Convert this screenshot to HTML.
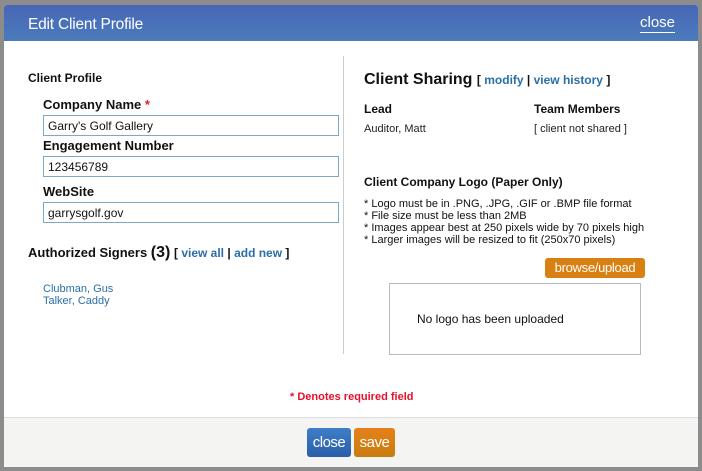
<!DOCTYPE html>
<html><head><style>
*{margin:0;padding:0;box-sizing:border-box}
body{width:702px;height:471px;background:#8c8c8c;font-family:"Liberation Sans",Arial,sans-serif;position:relative;overflow:hidden}
.dlg{position:absolute;left:4px;top:5px;width:694px;height:462px;background:#fff;overflow:hidden;border-radius:3px 3px 0 0}
.hdr{position:absolute;left:0;top:0;width:694px;height:36px;background:linear-gradient(#4866b6,#4a7bbb)}
.a{position:absolute;white-space:nowrap}
.b{font-weight:bold;color:#111}
.lnk{color:#2a6fa8}
input{position:absolute;height:21px;border:1px solid #7aaac8;font:12px "Liberation Sans",Arial,sans-serif;padding-left:4px;color:#111;background:#fff}
.foot{position:absolute;left:0;top:412px;width:694px;height:50px;background:#f4f4f2;border-top:1px solid #ddd}
.btn{position:absolute;top:423px;height:29px;border-radius:3px;color:#fff;font-size:15px;line-height:29px;text-align:center;letter-spacing:-0.5px}
</style></head><body>
<div class="dlg">
<div class="hdr"></div>
<div class="a" style="left:24px;top:11px;color:#fff;font-size:15.5px;letter-spacing:-0.2px">Edit Client Profile</div>
<div class="a" style="left:636px;top:9px;color:#fff;font-size:15px;border-bottom:1px solid #fff;line-height:18px">close</div>
<div class="a" style="left:339px;top:51px;width:1px;height:298px;background:#ccc"></div>
<div class="a b" style="left:24px;top:66px;font-size:12px">Client Profile</div>
<div class="a b" style="left:39px;top:92px;font-size:13px">Company Name <span style="color:#e02020">*</span></div>
<input style="left:39px;top:110px;width:296px" value="Garry's Golf Gallery">
<div class="a b" style="left:39px;top:133px;font-size:13px">Engagement Number</div>
<input style="left:39px;top:151px;width:296px" value="123456789">
<div class="a b" style="left:39px;top:179px;font-size:13px">WebSite</div>
<input style="left:39px;top:197px;width:296px" value="garrysgolf.gov">
<div class="a" style="left:24px;top:239px;font-size:13px;color:#111;font-weight:bold">Authorized Signers <span style="font-size:16px">(3)</span> <span style="font-size:12px">[ <span class="lnk">view all</span> | <span class="lnk">add new</span> ]</span></div>
<div class="a lnk" style="left:39px;top:278px;font-size:11px;line-height:12px">Clubman, Gus<br>Talker, Caddy</div>

<div class="a b" style="left:360px;top:66px;font-size:16px">Client Sharing <span style="font-size:12px">[ <span class="lnk">modify</span> | <span class="lnk">view history</span> ]</span></div>
<div class="a b" style="left:360px;top:97px;font-size:12px">Lead</div>
<div class="a b" style="left:530px;top:97px;font-size:12px">Team Members</div>
<div class="a" style="left:360px;top:118px;font-size:11px;color:#222">Auditor, Matt</div>
<div class="a" style="left:530px;top:118px;font-size:11px;color:#222">[ client not shared ]</div>
<div class="a b" style="left:360px;top:170px;font-size:12px">Client Company Logo (Paper Only)</div>
<div class="a" style="left:360px;top:193px;font-size:11px;line-height:12px;color:#111">* Logo must be in .PNG, .JPG, .GIF or .BMP file format<br>* File size must be less than 2MB<br>* Images appear best at 250 pixels wide by 70 pixels high<br>* Larger images will be resized to fit (250x70 pixels)</div>
<div class="a" style="left:541px;top:253px;width:100px;height:20px;background:#d98012;border-radius:3px;color:#fff;font-size:13px;line-height:20px;text-align:center;letter-spacing:-0.3px">browse/upload</div>
<div class="a" style="left:385px;top:278px;width:252px;height:72px;border:1px solid #bbb"></div>
<div class="a" style="left:413px;top:307px;font-size:12px;color:#111">No logo has been uploaded</div>

<div class="a" style="left:286px;top:386px;font-size:11px;font-weight:bold;color:#e8102a">* Denotes required field</div>
<div class="foot"></div>
<div class="btn" style="left:303px;width:44px;background:linear-gradient(#3f7fc8,#2a5ea8)">close</div>
<div class="btn" style="left:350px;width:41px;background:linear-gradient(#e6801a,#c77d10)">save</div>
</div>
</body></html>
